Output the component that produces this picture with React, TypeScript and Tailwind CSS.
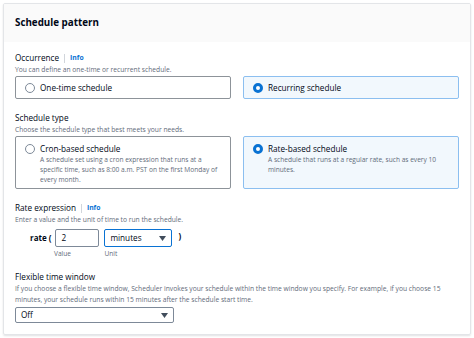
import { useState } from 'react';

const font = { fontFamily: '"Open Sans", "Noto Sans", Arial, sans-serif' };

function Radio({ checked }: { checked: boolean }) {
  return checked ? (
    <span className="box-border inline-block h-[10px] w-[10px] shrink-0 rounded-full border-[3px] border-[#0972d3] bg-white" />
  ) : (
    <span className="box-border inline-block h-[10px] w-[10px] shrink-0 rounded-full border border-[#7d8998] bg-white" />
  );
}

function Caret() {
  return (
    <svg width="7" height="5" viewBox="0 0 7 5" className="shrink-0">
      <path d="M0 0h7L3.5 5z" fill="#414d5c" />
    </svg>
  );
}

function Label({ text, info }: { text: string; info?: boolean }) {
  return (
    <div className="flex h-[12px] items-center text-[8.2px] leading-[12px] text-[#000716]">
      <span>{text}</span>
      {info && (
        <>
          <span className="mx-[5px] h-[9px] w-px bg-[#d1d5db]" />
          <span className="text-[6.8px] font-bold text-[#0972d3]">Info</span>
        </>
      )}
    </div>
  );
}

function Desc({ children }: { children: React.ReactNode }) {
  return <div className="text-[6.7px] leading-[11px] text-[#5f6b7a]">{children}</div>;
}

type TileProps = {
  checked: boolean;
  title: string;
  description?: string;
  tall?: boolean;
  onClick: () => void;
};

function Tile({ checked, title, description, tall, onClick }: TileProps) {
  return (
    <button
      type="button"
      onClick={onClick}
      className={
        'box-border flex flex-col rounded-[2px] border px-[9px] text-left ' +
        (tall ? 'h-[53px] pt-[6px] ' : 'h-[23px] justify-center ') +
        (checked ? 'border-[#8cbff0] bg-[#f2f8fd]' : 'border-[#8d9399] bg-white')
      }
    >
      <div className="flex items-center gap-[5px]">
        <Radio checked={checked} />
        <span className="text-[8.2px] leading-[11px] text-[#000716]">{title}</span>
      </div>
      {description && (
        <div className="pl-[15px] pt-[1px] text-[6.6px] leading-[10px] text-[#5f6b7a]">{description}</div>
      )}
    </button>
  );
}

export default function App() {
  const [occurrence, setOccurrence] = useState<'one' | 'recurring'>('recurring');
  const [scheduleType, setScheduleType] = useState<'cron' | 'rate'>('rate');

  return (
    <div className="h-[338px] w-[474px] bg-white p-[3px]" style={font}>
      <div className="box-border h-[332px] w-[468px] overflow-hidden rounded-[2px] border border-[#e3e5e8] shadow-[0_1px_2px_rgba(0,7,22,0.12)]">
        <div className="flex h-[38px] items-center bg-[#fafafa] px-[11px]">
          <h2 className="text-[9.8px] font-bold text-[#000716]">Schedule pattern</h2>
        </div>

        <div className="px-[11px] pt-[10px]">
          <Label text="Occurrence" info />
          <Desc>You can define an one-time or recurrent schedule.</Desc>
          <div className="mt-[1px] grid grid-cols-2 gap-[12px]">
            <Tile checked={occurrence === 'one'} title="One-time schedule" onClick={() => setOccurrence('one')} />
            <Tile
              checked={occurrence === 'recurring'}
              title="Recurring schedule"
              onClick={() => setOccurrence('recurring')}
            />
          </div>

          <div className="mt-[13px]">
            <Label text="Schedule type" />
            <Desc>Choose the schedule type that best meets your needs.</Desc>
            <div className="mt-[1px] grid grid-cols-2 gap-[12px]">
              <Tile
                tall
                checked={scheduleType === 'cron'}
                title="Cron-based schedule"
                description="A schedule set using a cron expression that runs at a specific time, such as 8:00 a.m. PST on the first Monday of every month."
                onClick={() => setScheduleType('cron')}
              />
              <Tile
                tall
                checked={scheduleType === 'rate'}
                title="Rate-based schedule"
                description="A schedule that runs at a regular rate, such as every 10 minutes."
                onClick={() => setScheduleType('rate')}
              />
            </div>
          </div>

          <div className="mt-[13px]">
            <Label text="Rate expression" info />
            <Desc>Enter a value and the unit of time to run the schedule.</Desc>
            <div className="mt-[4px] flex items-start pl-[15px]">
              <div className="flex flex-col">
                <div className="flex h-[18px] items-center">
                  <span className="mr-[4px] text-[8px] font-bold leading-[12px] text-[#000716]">rate (</span>
                  <div className="box-border flex h-[18px] w-[44px] items-center rounded-[2px] border border-[#7d8998] px-[5px] text-[8.2px] text-[#000716]">
                    2
                  </div>
                </div>
                <span className="pl-[24px] pt-[1px] text-[6.6px] leading-[11px] text-[#5f6b7a]">Value</span>
              </div>
              <div className="ml-[5px] flex flex-col">
                <div className="box-border flex h-[18px] w-[68px] items-center justify-between rounded-[2px] border border-[#0972d3] px-[5px] text-[8.2px] text-[#000716]">
                  <span>minutes</span>
                  <Caret />
                </div>
                <span className="pt-[1px] text-[6.6px] leading-[11px] text-[#5f6b7a]">Unit</span>
              </div>
              <span className="ml-[6px] mt-[1px] text-[8px] font-bold leading-[12px] text-[#000716]">)</span>
            </div>
          </div>

          <div className="mt-[12px]">
            <Label text="Flexible time window" />
            <Desc>
              If you choose a flexible time window, Scheduler invokes your schedule within the time window you specify. For
              example, if you choose 15 minutes, your schedule runs within 15 minutes after the schedule start time.
            </Desc>
            <div className="mt-[2px] box-border flex h-[16px] w-[159px] items-center justify-between rounded-[2px] border border-[#7d8998] px-[5px] text-[8.2px] text-[#000716]">
              <span>Off</span>
              <Caret />
            </div>
          </div>
        </div>
      </div>
    </div>
  );
}
